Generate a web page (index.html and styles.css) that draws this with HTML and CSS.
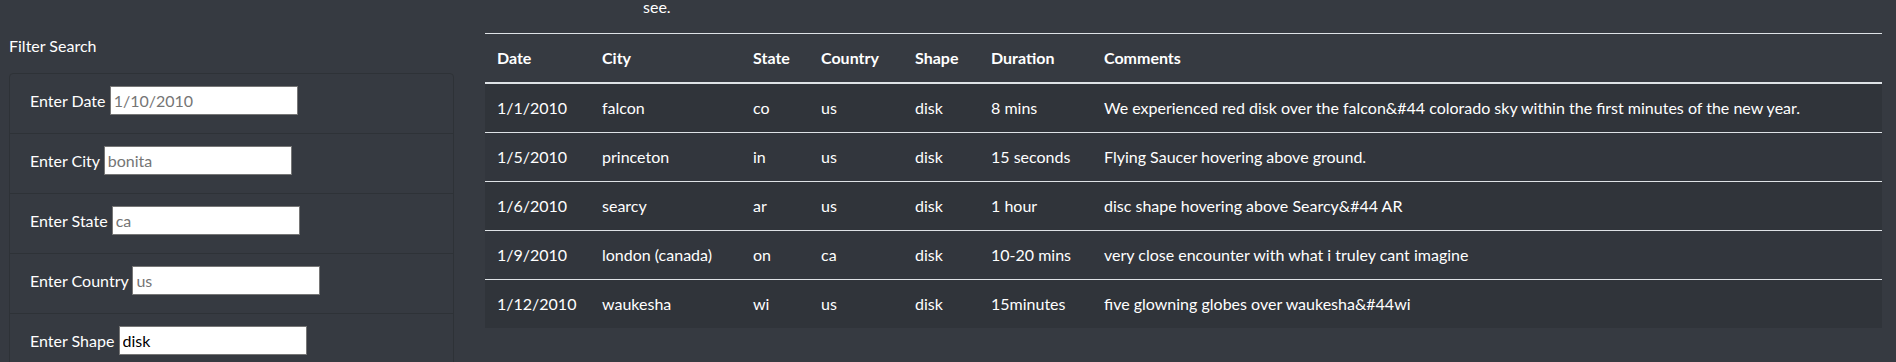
FILE: index.html
```html
<!DOCTYPE html>
<html lang="en">
<head>
  <meta charset="UTF-8">
  <meta name="viewport" content="width=device-width, initial-scale=1.0">
  <title>UFO Sightings</title>

  <link rel="stylesheet" href="styles.css">
</head>
<body>
  <div class="intro">
    <p>see.</p>
  </div>

  <div class="content">
    <aside class="filters">
      <h5 class="filters-title">Filter Search</h5>
      <form>
        <ul class="filter-list">
          <li class="filter-item">
            <label for="datetime">Enter Date</label>
            <input type="text" id="datetime" placeholder="1/10/2010">
          </li>
          <li class="filter-item">
            <label for="city">Enter City</label>
            <input type="text" id="city" placeholder="bonita">
          </li>
          <li class="filter-item">
            <label for="state">Enter State</label>
            <input type="text" id="state" placeholder="ca">
          </li>
          <li class="filter-item">
            <label for="country">Enter Country</label>
            <input type="text" id="country" placeholder="us">
          </li>
          <li class="filter-item">
            <label for="shape">Enter Shape</label>
            <input type="text" id="shape" placeholder="circle" value="disk">
          </li>
        </ul>
      </form>
    </aside>

    <main class="results">
      <table class="ufo-table">
        <colgroup>
          <col class="col-date">
          <col class="col-city">
          <col class="col-state">
          <col class="col-country">
          <col class="col-shape">
          <col class="col-duration">
          <col>
        </colgroup>
        <thead>
          <tr>
            <th>Date</th>
            <th>City</th>
            <th>State</th>
            <th>Country</th>
            <th>Shape</th>
            <th>Duration</th>
            <th>Comments</th>
          </tr>
        </thead>
        <tbody>
          <tr>
            <td>1/1/2010</td>
            <td>falcon</td>
            <td>co</td>
            <td>us</td>
            <td>disk</td>
            <td>8 mins</td>
            <td>We experienced red disk over the falcon&amp;#44 colorado sky within the first minutes of the new year.</td>
          </tr>
          <tr>
            <td>1/5/2010</td>
            <td>princeton</td>
            <td>in</td>
            <td>us</td>
            <td>disk</td>
            <td>15 seconds</td>
            <td>Flying Saucer hovering above ground.</td>
          </tr>
          <tr>
            <td>1/6/2010</td>
            <td>searcy</td>
            <td>ar</td>
            <td>us</td>
            <td>disk</td>
            <td>1 hour</td>
            <td>disc shape hovering above Searcy&amp;#44 AR</td>
          </tr>
          <tr>
            <td>1/9/2010</td>
            <td>london (canada)</td>
            <td>on</td>
            <td>ca</td>
            <td>disk</td>
            <td>10-20 mins</td>
            <td>very close encounter with what i truley cant imagine</td>
          </tr>
          <tr>
            <td>1/12/2010</td>
            <td>waukesha</td>
            <td>wi</td>
            <td>us</td>
            <td>disk</td>
            <td>15minutes</td>
            <td>five glowning globes over waukesha&amp;#44wi</td>
          </tr>
        </tbody>
      </table>
    </main>
  </div>
</body>
</html>
```

FILE: styles.css
```css
body {
  margin: 0;
  background: #363a41;
  color: #fff;
  font-family: Lato, "Liberation Sans", sans-serif;
  font-size: 16px;
  line-height: 1.5;
}

/* tail of the intro paragraph, scrolled mostly out of view */
.intro {
  height: 38px;
  margin-top: -5px;
  padding-left: 643px;
}

.intro p {
  margin: 0;
}

.content {
  display: flex;
  gap: 31px;
  padding: 0 14px 0 9px;
}

/* filter sidebar */
.filters {
  flex: none;
  width: 445px;
}

.filters-title {
  margin: 1px 0 15px;
  font-size: 16px;
  font-weight: 400;
  line-height: 24px;
}

.filter-list {
  list-style: none;
  margin: 0;
  padding: 0;
  border: 1px solid #2e3237;
  border-radius: 4px;
}

.filter-item {
  box-sizing: border-box;
  height: 59px;
  padding: 12px 20px;
}

.filter-item + .filter-item {
  height: 60px;
  border-top: 1px solid #2e3237;
}

.filter-item input {
  box-sizing: border-box;
  width: 188px;
  height: 29px;
  padding: 1px 3px;
  border: 1px solid #767676;
  border-radius: 0;
  background: #fff;
  color: #000;
  font: inherit;
}

.filter-item input::placeholder {
  color: #757575;
}

/* results table */
.results {
  flex: 1;
}

.ufo-table {
  width: 100%;
  border-collapse: collapse;
  table-layout: fixed;

  & .col-date { width: 105px; }
  & .col-city { width: 151px; }
  & .col-state { width: 68px; }
  & .col-country { width: 94px; }
  & .col-shape { width: 76px; }
  & .col-duration { width: 113px; }

  & th,
  & td {
    padding: 12px;
    border-top: 1px solid #dee2e6;
    text-align: left;
    line-height: 24px;
    white-space: nowrap;
  }

  & thead th {
    border-bottom: 2px solid #dee2e6;
    font-weight: 700;
  }

  & tbody tr {
    background: #32363d;
  }

  & tbody tr:nth-child(odd) {
    background: #30343a;
  }
}
```
